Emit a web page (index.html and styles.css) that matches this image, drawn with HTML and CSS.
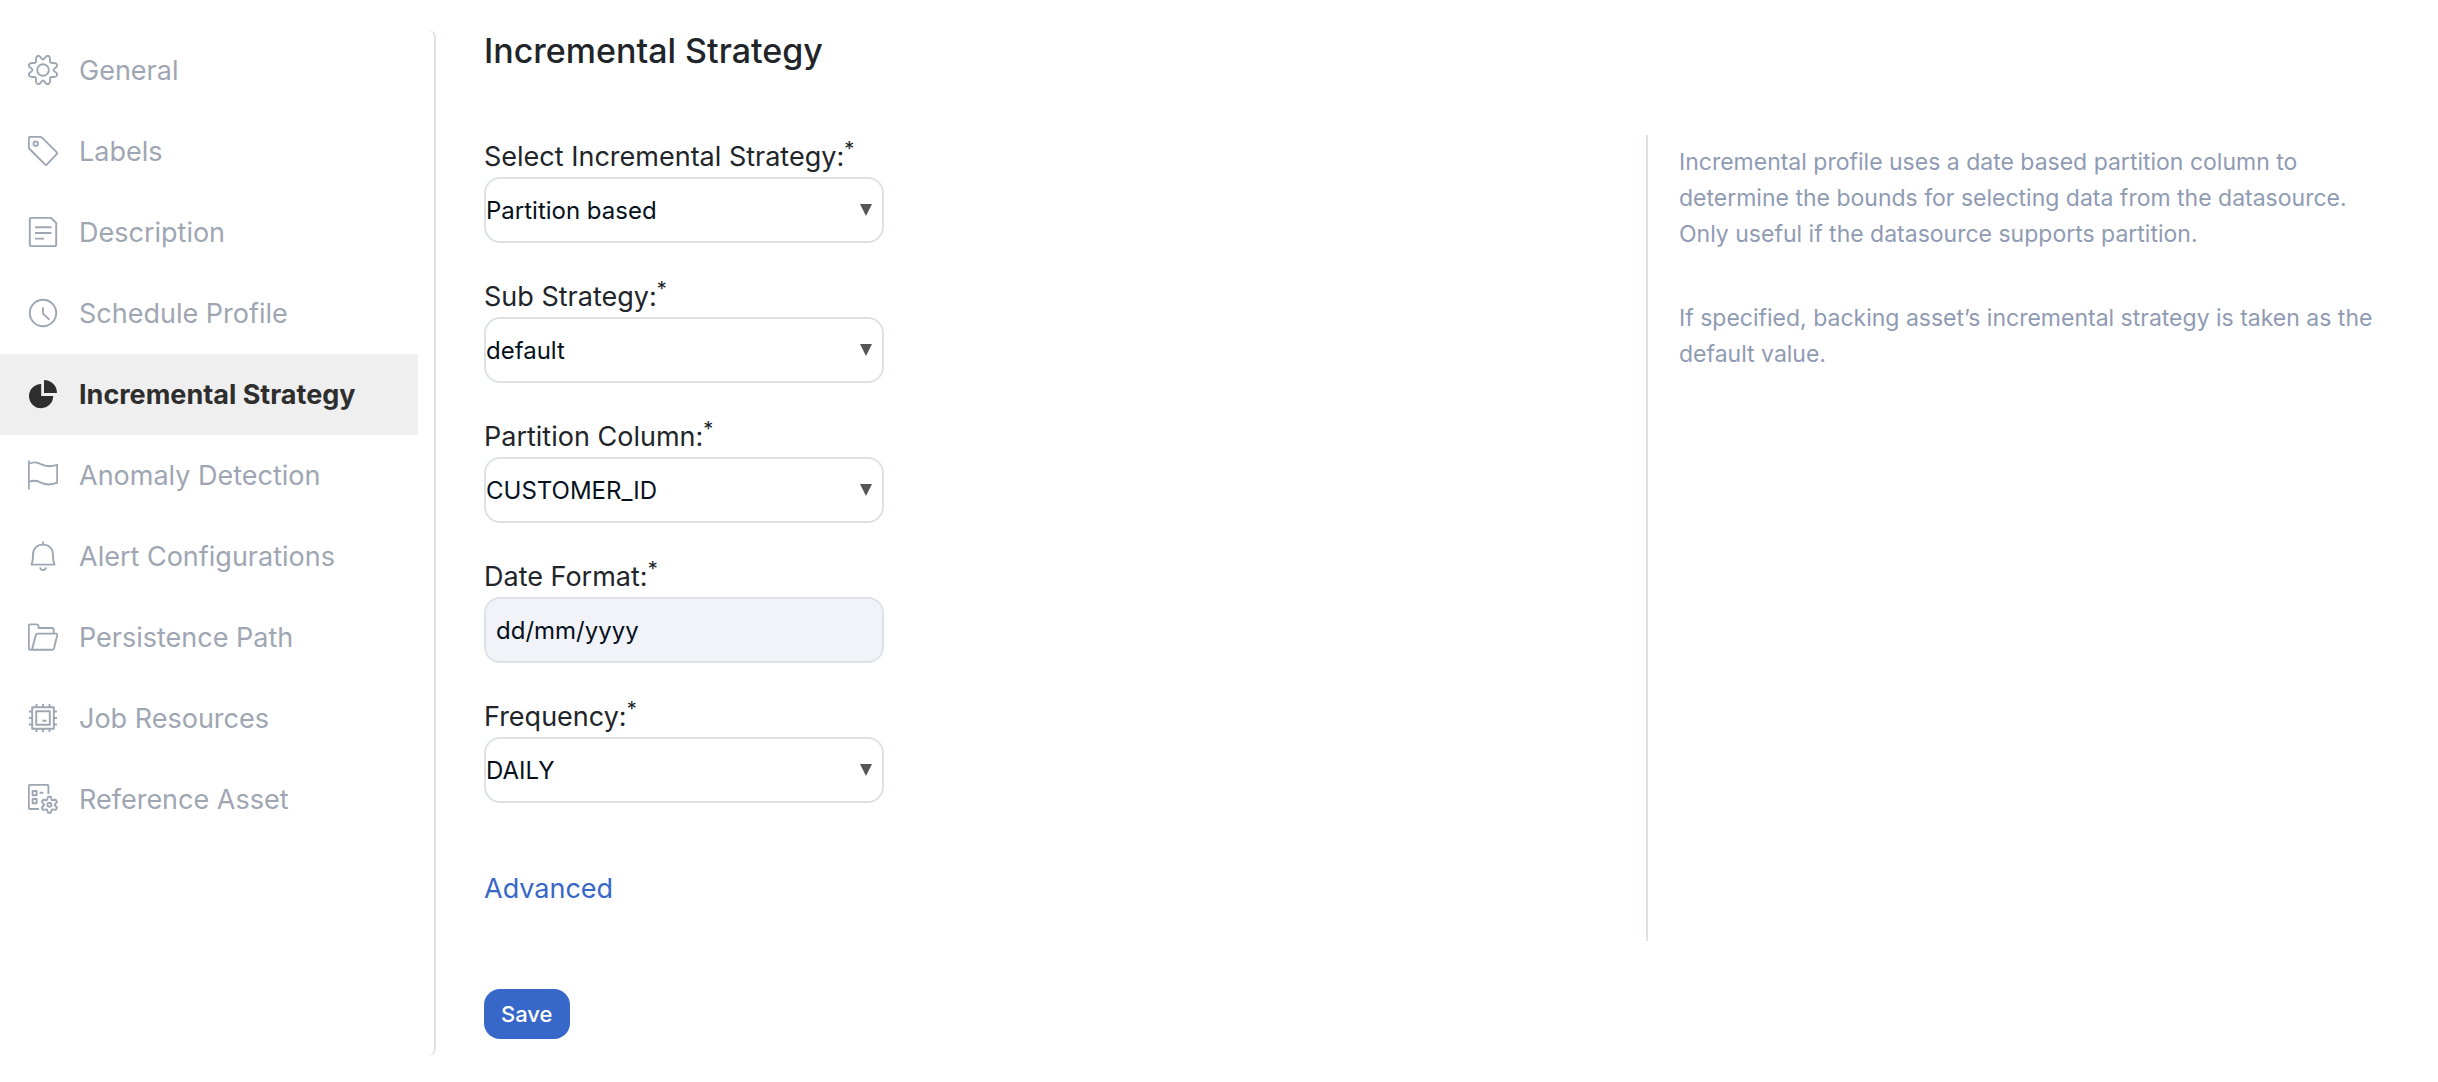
FILE: index.html
```
<!DOCTYPE html>
<html lang="en">
<head>
    <meta charset="UTF-8">
    <meta name="viewport" content="width=device-width, initial-scale=1.0">
    <title>Incremental Strategy</title>
    <link rel="stylesheet" href="styles.css">
</head>
<body>
    <div class="layout">
        <nav class="sidebar">
            <a class="nav-item" href="#general">
                <svg class="icon" viewBox="0 0 30 30">
                    <path d="M16.8 3.1Q18.6.2 20.5 1Q22.4 1.8 22 5.1Q21.5 8.5 24.9 8Q28.2 7.6 29 9.5Q29.8 11.4 26.9 13.2Q24 15 26.9 16.8Q29.8 18.6 29 20.5Q28.2 22.4 24.9 22Q21.5 21.5 22 24.9Q22.4 28.2 20.5 29Q18.6 29.8 16.8 26.9Q15 24 13.2 26.9Q11.4 29.8 9.5 29Q7.6 28.2 8 24.9Q8.5 21.5 5.1 22Q1.8 22.4 1 20.5Q.2 18.6 3.1 16.8Q6 15 3.1 13.2Q.2 11.4 1 9.5Q1.8 7.6 5.1 8Q8.5 8.5 8 5.1Q7.6 1.8 9.5 1Q11.4.2 13.2 3.1Q15 6 16.8 3.1Z"/>
                    <circle cx="15" cy="15" r="5.8"/>
                </svg>
                <span>General</span>
            </a>
            <a class="nav-item" href="#labels">
                <svg class="icon" viewBox="0 0 30 30">
                    <path d="M2.5.8H12L14 1.6L28.6 16.2Q29.6 17.2 28.6 18.2L19 28.4Q18 29.4 17 28.4L1.6 13Q.8 12.2.8 11V2.5Q.8.8 2.5.8Z"/>
                    <circle cx="7.7" cy="7.7" r="2.2"/>
                </svg>
                <span>Labels</span>
            </a>
            <a class="nav-item" href="#description">
                <svg class="icon" viewBox="0 0 30 30">
                    <path d="M3.4.8H23L28.2 6V27.6Q28.2 29.2 26.6 29.2H3.4Q1.8 29.2 1.8 27.6V2.4Q1.8.8 3.4.8ZM7 10.3H23.5M7 16H23.5M7 21.6H16"/>
                </svg>
                <span>Description</span>
            </a>
            <a class="nav-item" href="#schedule">
                <svg class="icon" viewBox="0 0 30 30">
                    <circle cx="15" cy="15" r="13.2"/>
                    <path d="M15 9.2V15.6L21.4 21.6"/>
                </svg>
                <span>Schedule Profile</span>
            </a>
            <a class="nav-item active" href="#incremental">
                <svg class="icon icon-solid" viewBox="0 0 30 30">
                    <path d="M13.2 5V17H25.2A12.1 12.1 0 1 1 13.2 5ZM16 1A13 13 0 0 1 29 14H16Z"/>
                </svg>
                <span>Incremental Strategy</span>
            </a>
            <a class="nav-item" href="#anomaly">
                <svg class="icon" viewBox="0 0 30 30">
                    <path d="M.8.5V29.5M.8 4C5 1.8 9 1.8 13 4.2C18 7 23 6.8 29.2 4.8V22.6C23 25.2 18 25.2 13 22.6C9 20.2 5 20.2.8 22"/>
                </svg>
                <span>Anomaly Detection</span>
            </a>
            <a class="nav-item" href="#alerts">
                <svg class="icon" viewBox="0 0 30 30">
                    <path d="M15 .5V3.6M3.4 23.6C4.8 21 5 19 5 13.6C5 7.6 9 3.6 15 3.6S25 7.6 25 13.6C25 19 25.2 21 26.6 23.6ZM12 26.4Q12.6 29 15 29T18 26.4"/>
                </svg>
                <span>Alert Configurations</span>
            </a>
            <a class="nav-item" href="#persistence">
                <svg class="icon" viewBox="0 0 30 30">
                    <path d="M4 27.8H2.4Q.8 27.8.8 26.2V4Q.8 2.4 2.4 2.4H8.6Q10.2 2.4 10.4 4L10.8 6H24Q25.6 6 25.6 7.6V11.6M4 27.8L7.8 13Q8.2 11.6 9.6 11.6H28Q29.6 11.6 29.2 13.2L26 26.4Q25.6 27.8 24.2 27.8Z"/>
                </svg>
                <span>Persistence Path</span>
            </a>
            <a class="nav-item" href="#resources">
                <svg class="icon" viewBox="0 0 30 30">
                    <path d="M4.2 4.2H25.8V25.8H4.2ZM8.2 8.2H21.8V21.8H8.2ZM14.5 17.8H18.5M8.5 1V4M15 1V4M21.5 1V4M8.5 26V29M15 26V29M21.5 26V29M1 8.5H4M1 15H4M1 21.5H4M26 8.5H29M26 15H29M26 21.5H29"/>
                </svg>
                <span>Job Resources</span>
            </a>
            <a class="nav-item" href="#reference">
                <svg class="icon" viewBox="0 0 30 30">
                    <path d="M11 25H2.4Q.8 25 .8 23.4V2.4Q.8.8 2.4.8H18.8Q20.4.8 20.4 2.4V10M4.6 7H8.6V11.2H4.6ZM4.6 15H8.6V19.2H4.6ZM11.6 8.8H15.4"/>
                    <g transform="translate(21.4 20.8)">
                        <path d="M-1.3 -8H1.3L2.5 -4.6L6.3 -5.1L7.6 -2.9L5.2 0L7.6 2.9L6.3 5.1L2.5 4.6L1.3 8H-1.3L-2.5 4.6L-6.3 5.1L-7.6 2.9L-5.2 0L-7.6 -2.9L-6.3 -5.1L-2.5 -4.6Z"/>
                        <circle r="2"/>
                    </g>
                </svg>
                <span>Reference Asset</span>
            </a>
        </nav>

        <main class="content">
            <h1>Incremental Strategy</h1>

            <form id="strategy-form" class="columns">
                <div class="fields">
                    <div class="field">
                        <label for="strategy">Select Incremental Strategy:<sup>*</sup></label>
                        <select id="strategy">
                            <option>Partition based</option>
                        </select>
                    </div>
                    <div class="field">
                        <label for="sub-strategy">Sub Strategy:<sup>*</sup></label>
                        <select id="sub-strategy">
                            <option>default</option>
                        </select>
                    </div>
                    <div class="field">
                        <label for="partition-column">Partition Column:<sup>*</sup></label>
                        <select id="partition-column">
                            <option>CUSTOMER_ID</option>
                        </select>
                    </div>
                    <div class="field">
                        <label for="date-format">Date Format:<sup>*</sup></label>
                        <input type="text" id="date-format" value="dd/mm/yyyy">
                    </div>
                    <div class="field">
                        <label for="frequency">Frequency:<sup>*</sup></label>
                        <select id="frequency">
                            <option>DAILY</option>
                        </select>
                    </div>
                    <a class="advanced" href="#advanced">Advanced</a>
                </div>

                <aside class="help">
                    <p>Incremental profile uses a date based partition column to determine the bounds for selecting data from the datasource. Only useful if the datasource supports partition.</p>
                    <p>If specified, backing asset’s incremental strategy is taken as the default value.</p>
                </aside>
            </form>

            <button class="save-button" type="submit" form="strategy-form">Save</button>
        </main>
    </div>
</body>
</html>
```
FILE: styles.css
```
* {
    box-sizing: border-box;
}
body {
    margin: 0;
    font-family: Inter, "Open Sans", sans-serif;
    font-size: 27px;
    line-height: 42px;
    color: #212529;
    background-color: #fff;
}
.layout {
    display: flex;
    align-items: flex-start;
    padding: 30px 0 26px;
}

/* Sidebar */
.sidebar {
    flex: none;
    width: 436px;
    min-height: calc(100vh - 56px);
    padding-right: 16px;
    border-right: 2px solid #dee2e6;
    border-radius: 8px;
}
.nav-item {
    display: flex;
    align-items: center;
    gap: 21px;
    height: 81px;
    padding-left: 28px;
    color: #9fa6b3;
    text-decoration: none;
}
.nav-item.active {
    background-color: #efefef;
    color: #2e2e2e;
    font-weight: bold;
}
.icon {
    flex: none;
    width: 30px;
    height: 30px;
    margin-bottom: 2px;
    fill: none;
    stroke: currentColor;
    stroke-width: 1.9;
    stroke-linejoin: round;
}
.icon-solid {
    fill: currentColor;
    stroke: none;
}

/* Content */
.content {
    flex: 1;
    padding-left: 48px;
}
h1 {
    margin: 0 0 63px;
    font-size: 34px;
    font-weight: 500;
    line-height: 42px;
}
.columns {
    display: grid;
    grid-template-columns: 1162fr 792fr;
    margin-bottom: 48px;
}
.field {
    width: 400px;
    margin-bottom: 32px;
}
.field label {
    display: block;
    padding-top: 2px;
    line-height: 40px;
}
sup {
    font-size: 20px;
    line-height: 0;
}
select,
input {
    display: block;
    width: 100%;
    height: 66px;
    padding: 0;
    border: 2px solid #dee2e6;
    border-radius: 16px;
    font-family: inherit;
    font-size: 24px;
    color: #04111d;
}
select {
    appearance: none;
    background: #fff url("data:image/svg+xml,%3Csvg xmlns='http://www.w3.org/2000/svg' viewBox='0 0 12 12'%3E%3Cpath d='M0 0h12L6 12z' fill='%23555'/%3E%3C/svg%3E") no-repeat right 10px center / 12px 12px;
}
input {
    padding-left: 10px;
    background-color: #f2f3f8;
}
.advanced {
    display: inline-block;
    margin: 33px 0 31px;
    color: #3767c8;
    text-decoration: none;
}
.help {
    padding: 9px 44px 0 31px;
    border-left: 2px solid #dee2e6;
    font-size: 23px;
    line-height: 36px;
    color: #8f9bb3;
}
.help p {
    margin: 0 0 48px;
}
.save-button {
    display: block;
    height: 50px;
    padding: 0 17px;
    border: none;
    border-radius: 16px;
    background-color: #3767c8;
    color: #fff;
    font-family: inherit;
    font-size: 22px;
    font-weight: 500;
    cursor: pointer;
}
```
